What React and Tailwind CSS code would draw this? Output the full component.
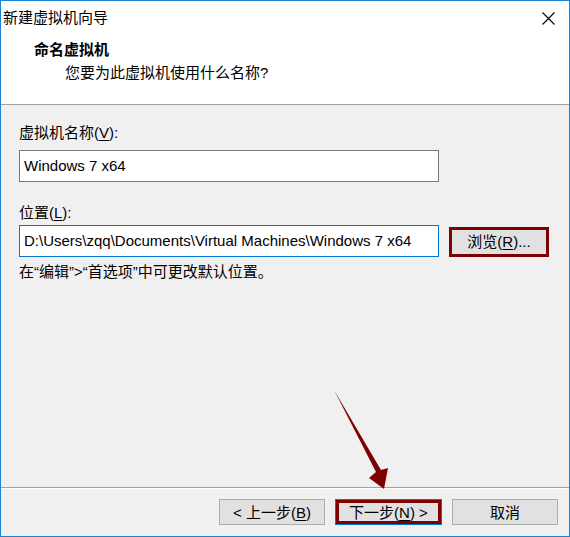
import React from "react";

const font = { fontFamily: '"Liberation Sans", "Noto Sans CJK SC", sans-serif' };

function Btn({ children, className = "" }) {
  return (
    <div
      className={
        "flex items-center justify-center bg-[#e1e1e1] border border-[#adadad] text-[15px] leading-none text-black " +
        className
      }
    >
      {children}
    </div>
  );
}

export default function App() {
  return (
    <div
      className="relative w-[570px] h-[537px] border border-[#1883d7] bg-[#f0f0f0] flex flex-col overflow-hidden text-black"
      style={font}
    >
      {/* title bar */}
      <div className="h-[31px] bg-white flex items-center justify-between pl-[2px] pr-[14px]">
        <span className="text-[15px] leading-[20px] mt-[2px]">新建虚拟机向导</span>
        <svg width="13" height="13" viewBox="0 0 13 13" className="mt-[3px]">
          <path d="M0.5 0.5 L12.5 12.5 M12.5 0.5 L0.5 12.5" stroke="#000" strokeWidth="1.1" />
        </svg>
      </div>

      {/* header */}
      <div className="h-[72px] bg-white flex flex-col pl-[33px] pt-[8px]">
        <span className="text-[15px] leading-[20px] font-bold">命名虚拟机</span>
        <span className="text-[15px] leading-[20px] pl-[31px] mt-[3px]">您要为此虚拟机使用什么名称?</span>
      </div>
      <div className="h-px bg-[#a0a0a0]" />

      {/* body */}
      <div className="flex-1 flex flex-col pl-[18px]">
        <span className="text-[15px] leading-[20px] mt-[18px]">
          虚拟机名称(<span className="underline underline-offset-2">V</span>):
        </span>
        <div className="mt-[7px] w-[420px] h-[32px] bg-white border border-[#7a7a7a] flex items-center pl-[4px] text-[15px]">
          Windows 7 x64
        </div>

        <span className="text-[15px] leading-[20px] mt-[21px]">
          位置(<span className="underline underline-offset-2">L</span>):
        </span>
        <div className="mt-[2px] flex items-start gap-[10px]">
          <div className="w-[420px] h-[32px] bg-white border border-[#0078d7] flex items-center pl-[4px] text-[15px] whitespace-nowrap">
            D:\Users\zqq\Documents\Virtual Machines\Windows 7 x64
          </div>
          <div className="mt-[2px] w-[100px] h-[30px] bg-[#e1e1e1] border-[3px] border-[#7f0000] flex items-center justify-center text-[15px]">
            浏览(<span className="underline underline-offset-2">R</span>)...
          </div>
        </div>
        <span className="text-[15px] leading-[20px] mt-[5px]">在“编辑”&gt;“首选项”中可更改默认位置。</span>
      </div>

      {/* footer */}
      <div className="h-px bg-[#a0a0a0]" />
      <div className="h-px bg-white" />
      <div className="h-[47px] flex items-start justify-end gap-[10px] pr-[11px] pt-[10px]">
        <Btn className="w-[106px] h-[26px]">
          &lt; 上一步(<span className="underline underline-offset-2">B</span>)
        </Btn>
        <div className="w-[107px] h-[26px] border border-[#0078d7] flex">
          <div className="flex-1 bg-[#e1e1e1] border-[3px] border-[#7f0000] flex items-center justify-center text-[15px] leading-none">
            下一步(<span className="underline underline-offset-2">N</span>) &gt;
          </div>
        </div>
        <Btn className="w-[106px] h-[26px]">取消</Btn>
      </div>

      {/* annotation arrow */}
      <svg
        className="absolute left-0 top-0 pointer-events-none"
        width="570"
        height="537"
        viewBox="0 0 570 537"
      >
        <polygon
          points="333,389 375,471 368,477 383,488 387,467 380,469"
          fill="#7f0000"
        />
      </svg>
    </div>
  );
}
